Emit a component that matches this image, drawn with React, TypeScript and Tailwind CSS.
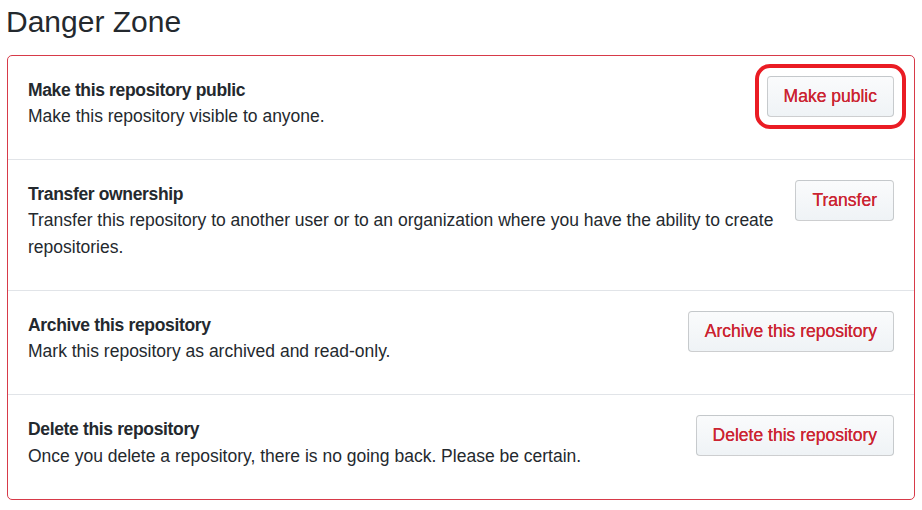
import React from "react";

type Row = { title: string; desc: string; button: string; annotate?: boolean };

const rows: Row[] = [
  {
    title: "Make this repository public",
    desc: "Make this repository visible to anyone.",
    button: "Make public",
    annotate: true,
  },
  {
    title: "Transfer ownership",
    desc: "Transfer this repository to another user or to an organization where you have the ability to create repositories.",
    button: "Transfer",
  },
  {
    title: "Archive this repository",
    desc: "Mark this repository as archived and read-only.",
    button: "Archive this repository",
  },
  {
    title: "Delete this repository",
    desc: "Once you delete a repository, there is no going back. Please be certain.",
    button: "Delete this repository",
  },
];

function DangerButton({ label, annotate }: { label: string; annotate?: boolean }) {
  return (
    <div className="relative mt-[-1px] shrink-0">
      <button className="h-[41px] rounded-[4px] border border-[rgba(27,31,35,0.2)] bg-gradient-to-b from-[#fafbfc] to-[#eff3f6] px-[16px] text-[17.5px] leading-[25px] text-[#cb2431] [text-shadow:0_0_0.4px_#cb2431] whitespace-nowrap">
        {label}
      </button>
      {annotate && (
        <div className="pointer-events-none absolute inset-[-12px] rounded-[15px] border-[4px] border-[#ea1c24]" />
      )}
    </div>
  );
}

export default function App() {
  return (
    <div
      className="h-[510px] w-[922px] overflow-hidden bg-white text-[#24292e]"
      style={{ fontFamily: '"Liberation Sans", Arial, sans-serif' }}
    >
      <h2 className="mt-[3px] pl-[6px] text-[30px] font-normal leading-[37.5px]">Danger Zone</h2>
      <div className="mx-[7px] mt-[14px] rounded-[5px] border border-[#d73a49]">
        {rows.map((r, i) => (
          <div
            key={r.title}
            className={`flex items-start gap-[8px] px-[20px] pt-[21px] pb-[30px] ${
              i < rows.length - 1 ? "border-b border-[#e1e4e8]" : ""
            }`}
          >
            <div className="min-w-0 flex-1 text-[17.5px] leading-[26.25px]">
              <div className="font-bold tracking-[-0.35px]">{r.title}</div>
              <p>{r.desc}</p>
            </div>
            <DangerButton label={r.button} annotate={r.annotate} />
          </div>
        ))}
      </div>
    </div>
  );
}
